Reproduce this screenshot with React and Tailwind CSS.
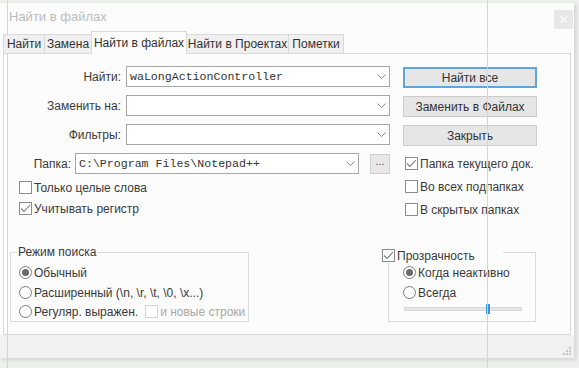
import React from "react";

const font = { fontFamily: '"Liberation Sans", Arial, sans-serif' };

function Chevron() {
  return (
    <svg width="9" height="5" viewBox="0 0 9 5" className="shrink-0">
      <polyline points="0.5,0.5 4.5,4.5 8.5,0.5" fill="none" stroke="#8a8a8a" strokeWidth="1" />
    </svg>
  );
}

function Combo({ value, width }) {
  return (
    <div
      className={`flex h-[21px] items-center justify-between border border-[#a6a6a6] bg-white pl-[3px] pr-[3px] ${width}`}
    >
      <span
        className="whitespace-nowrap text-[11.6px] leading-none text-[#333]"
        style={{ fontFamily: '"Liberation Mono", monospace' }}
      >
        {value}
      </span>
      <Chevron />
    </div>
  );
}

function Check({ checked, label, disabled }) {
  return (
    <div className="flex h-[13px] items-center whitespace-nowrap">
      <div
        className={`flex h-[13px] w-[13px] shrink-0 items-center justify-center border bg-white ${
          disabled ? "border-[#d4d4d4]" : "border-[#8c8c8c]"
        }`}
      >
        {checked && (
          <svg width="11" height="9" viewBox="0 0 11 9">
            <polyline points="1,4.5 4,7.5 10,1" fill="none" stroke="#7a7a7a" strokeWidth="1.1" />
          </svg>
        )}
      </div>
      <span className={`ml-[2px] text-[12px] leading-none ${disabled ? "text-[#a8a8a8]" : "text-[#3a3a3a]"}`}>
        {label}
      </span>
    </div>
  );
}

function Radio({ checked, label }) {
  return (
    <div className="flex h-[13px] items-center whitespace-nowrap">
      <div className="flex h-[13px] w-[13px] shrink-0 items-center justify-center rounded-full border border-[#7c7c7c] bg-white">
        {checked && <div className="h-[7px] w-[7px] rounded-full bg-[#6a6a6a]" />}
      </div>
      <span className="ml-[2px] text-[12px] leading-none text-[#3a3a3a]">{label}</span>
    </div>
  );
}

function Btn({ children, focused }) {
  return (
    <div
      className={`flex h-[21px] w-[134px] items-center justify-center whitespace-nowrap bg-[#e6e6e6] text-[12px] text-[#333] ${
        focused ? "border-2 border-[#5fa6de]" : "border border-[#cccccc]"
      }`}
    >
      {children}
    </div>
  );
}

const tabs = [
  { label: "Найти", w: "w-[42px]" },
  { label: "Замена", w: "w-[48px]" },
  { label: "Найти в файлах", w: "w-[96px]", active: true },
  { label: "Найти в Проектах", w: "w-[103px]" },
  { label: "Пометки", w: "w-[56px]" },
];

export default function App() {
  return (
    <div className="relative h-[368px] w-[579px] overflow-hidden bg-[#eef0ee]" style={font}>
      <div className="mt-[3px] flex h-[355px] w-[574px] flex-col bg-[#fcfcfc] shadow-[2px_2px_4px_rgba(0,0,0,0.12)]">
        {/* title bar */}
        <div className="flex h-[29px] items-start justify-between">
          <span className="ml-[9px] mt-[6px] whitespace-nowrap text-[13px] leading-[16px] text-[#bcbcbc]">
            Найти в файлах
          </span>
          <div className="mr-[1px] mt-[7px] flex h-[19px] w-[19px] items-center justify-center bg-[#e8e8e8]">
            <svg width="7" height="7" viewBox="0 0 7 7">
              <path d="M0.5 0.5 L6.5 6.5 M6.5 0.5 L0.5 6.5" stroke="#fafafa" strokeWidth="1.4" />
            </svg>
          </div>
        </div>

        {/* tabs */}
        <div className="relative z-10 flex h-[21px] items-end pl-[3px]">
          {tabs.map((t) =>
            t.active ? (
              <div
                key={t.label}
                className={`-mb-[1px] -ml-[1px] flex h-[23px] items-center justify-center whitespace-nowrap border border-b-0 border-[#d9d9d9] bg-[#fcfcfc] text-[12px] text-[#333] ${t.w}`}
              >
                {t.label}
              </div>
            ) : (
              <div
                key={t.label}
                className={`-ml-[1px] flex h-[19px] items-center justify-center whitespace-nowrap border border-b-0 border-[#d9d9d9] bg-[#f0f0f0] text-[12px] text-[#333] first:ml-0 ${t.w}`}
              >
                {t.label}
              </div>
            )
          )}
        </div>

        {/* panel */}
        <div className="ml-[3px] flex h-[282px] w-[568px] flex-col border border-[#d9d9d9] bg-[#fcfcfc]">
          <div className="flex">
            {/* left column */}
            <div className="flex w-[395px] flex-col">
              <div className="mt-[12px] flex items-center">
                <span className="w-[117px] text-right text-[12px] text-[#3a3a3a]">Найти:</span>
                <div className="ml-[5px]">
                  <Combo value="waLongActionController" width="w-[264px]" />
                </div>
              </div>
              <div className="mt-[8px] flex items-center">
                <span className="w-[117px] text-right text-[12px] text-[#3a3a3a]">Заменить на:</span>
                <div className="ml-[5px]">
                  <Combo value="" width="w-[264px]" />
                </div>
              </div>
              <div className="mt-[8px] flex items-center">
                <span className="w-[117px] text-right text-[12px] text-[#3a3a3a]">Фильтры:</span>
                <div className="ml-[5px]">
                  <Combo value="" width="w-[264px]" />
                </div>
              </div>
              <div className="mt-[8px] flex h-[21px] items-center">
                <span className="w-[67px] text-right text-[12px] text-[#3a3a3a]">Папка:</span>
                <div className="ml-[4px]">
                  <Combo value="C:\Program Files\Notepad++" width="w-[284px]" />
                </div>
                <div className="ml-[11px] flex h-[20px] w-[20px] items-center justify-center border border-[#cfcfcf] bg-[#e8e8e8] pb-[4px] text-[11px] text-[#444]">
                  ...
                </div>
              </div>
              <div className="ml-[15px] mt-[7px] flex flex-col gap-[8px]">
                <Check label="Только целые слова" />
                <Check checked label="Учитывать регистр" />
              </div>
            </div>

            {/* right column */}
            <div className="ml-[4px] flex flex-col">
              <div className="mt-[13px] flex flex-col gap-[8px]">
                <Btn focused>Найти все</Btn>
                <Btn>Заменить в Файлах</Btn>
                <Btn>Закрыть</Btn>
              </div>
              <div className="ml-[2px] mt-[11px] flex flex-col gap-[10px]">
                <Check checked label="Папка текущего док." />
                <Check label="Во всех подпапках" />
                <Check label="В скрытых папках" />
              </div>
            </div>
          </div>

          {/* bottom groups */}
          <div className="mt-[36px] flex">
            <div className="relative ml-[6px] h-[70px] w-[239px] border border-[#dcdcdc]">
              <span className="absolute -top-[9px] left-[6px] whitespace-nowrap bg-[#fcfcfc] px-[1px] text-[12px] leading-[16px] text-[#3a3a3a]">
                Режим поиска
              </span>
              <div className="ml-[8px] mt-[13px] flex flex-col">
                <Radio checked label="Обычный" />
                <div className="mt-[7px]">
                  <Radio label="Расширенный (\n, \r, \t, \0, \x...)" />
                </div>
                <div className="mt-[6px] flex items-center">
                  <Radio label="Регуляр. выражен." />
                  <div className="ml-[7px]">
                    <Check disabled label="и новые строки" />
                  </div>
                </div>
              </div>
            </div>

            <div className="relative ml-[139px] h-[70px] w-[148px] border border-[#dcdcdc]">
              <div className="absolute -left-[7px] -top-[5px] flex h-[15px] w-[121px] items-center bg-[#fcfcfc]">
                <Check checked label="Прозрачность" />
              </div>
              <div className="ml-[14px] mt-[13px] flex flex-col gap-[7px]">
                <Radio checked label="Когда неактивно" />
                <Radio label="Всегда" />
              </div>
              <div className="relative ml-[15px] mt-[8px] h-[4px] w-[118px] border border-[#d8d8d8] bg-[#e6e6e6]">
                <div className="absolute -top-[4px] left-[81px] h-[10px] w-[4px] bg-[#3c93da]" />
              </div>
            </div>
          </div>
        </div>

        {/* footer */}
        <div className="relative flex-1 bg-[#f0f1f0]">
          <svg className="absolute bottom-[2px] right-[2px]" width="9" height="9" viewBox="0 0 9 9">
            <g fill="#c6c6c6">
              <rect x="6" y="0" width="2" height="2" />
              <rect x="3" y="3" width="2" height="2" />
              <rect x="6" y="3" width="2" height="2" />
              <rect x="0" y="6" width="2" height="2" />
              <rect x="3" y="6" width="2" height="2" />
              <rect x="6" y="6" width="2" height="2" />
            </g>
          </svg>
        </div>
      </div>

      {/* guide lines */}
      <div className="absolute left-[7px] top-0 h-[368px] w-px bg-[#9aeef2]" />
      <div className="absolute left-[487px] top-0 h-[368px] w-px bg-[#9aeef2]" />
    </div>
  );
}
